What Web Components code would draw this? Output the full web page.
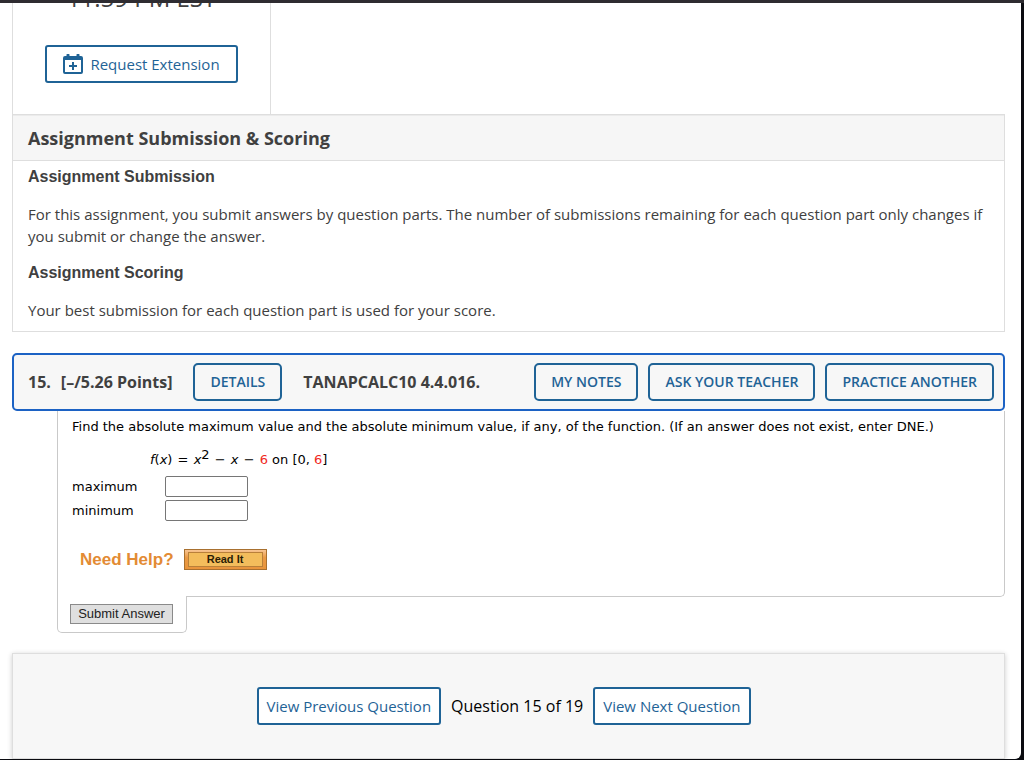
<!DOCTYPE html>
<html lang="en">
<head>
<meta charset="utf-8">
<title>Question 15</title>
<style>
    body{
        margin:0;
        background-color:#0a0b10;
        color:#404040;
        font-family:"Open Sans", "Liberation Sans", sans-serif;
    }
</style>
</head>
<body>
<assignment-page>
    <due-card time="11:59 PM EST"></due-card>
    <scoring-panel>
        <span slot="title">Assignment Submission &amp; Scoring</span>
    </scoring-panel>
    <question-box number="15." points="[–/5.26 Points]" code="TANAPCALC10 4.4.016."></question-box>
    <question-nav>Question 15 of 19</question-nav>
</assignment-page>

<script>
class AssignmentPage extends HTMLElement{
    constructor(){
        super()
        this.attachShadow({mode: "open"})
        this.shadowRoot.innerHTML = `
            <style>
                :host{
                    display:block;
                    box-sizing:border-box;
                    min-height:100vh;
                    padding:0 3px 1px 0;
                    border-top:3px solid #2e2c31;
                }
                main{
                    box-sizing:border-box;
                    min-height:calc(100vh - 4px);
                    padding:0 16px 0 12px;
                    overflow:hidden;
                    background-color:#fff;
                    border-bottom-right-radius:6px;
                }
            </style>
            <main><slot></slot></main>
        `
    }
}
customElements.define('assignment-page', AssignmentPage)

//blue outlined button, type="caps" is the bold one in the question header
class OutlineButton extends HTMLElement{
    constructor(){
        super()
        this.attachShadow({mode: "open"})
        this.shadowRoot.innerHTML = `
            <style>
                :host{
                    display:inline-block;
                }
                button{
                    display:flex;
                    align-items:center;
                    gap:7px;
                    height:38px;
                    padding:0 var(--pad, 8px);
                    border:2px solid #1f6396;
                    border-radius:3px;
                    background-color:#fff;
                    color:#1f6396;
                    font:15px/22px "Open Sans", sans-serif;
                    white-space:nowrap;
                }
                :host([type="caps"]) button{
                    padding:0 15px;
                    border-radius:5px;
                    background-color:#f7f7f7;
                    font-size:14px;
                    font-weight:600;
                }
            </style>
            <button type="button"><slot name="icon"></slot><slot></slot></button>
        `
    }
}
customElements.define('outline-button', OutlineButton)

class DueCard extends HTMLElement{
    constructor(){
        super()
        this.attachShadow({mode: "open"})
        this.shadowRoot.innerHTML = `
            <style>
                :host{
                    display:flex;
                    flex-direction:column;
                    justify-content:flex-end;
                    align-items:center;
                    box-sizing:border-box;
                    width:259px;
                    height:111px;
                    padding-bottom:31px;
                    overflow:hidden;
                    border:1px solid #dedede;
                    border-width:0 1px;
                }
                time{
                    flex:none;
                    margin-bottom:32px;
                    font-size:24px;
                    line-height:30px;
                }
                outline-button{
                    --pad:16px;
                    flex:none;
                }
                svg{
                    display:block;
                }
            </style>
            <time></time>
            <outline-button>
                <svg slot="icon" width="20" height="20" viewBox="0 0 20 20" fill="none" stroke="#1f6396" aria-hidden="true">
                    <rect x="1" y="3" width="18" height="16" rx="1" stroke-width="2"/>
                    <path d="M1 4.5h18" stroke-width="3"/>
                    <path d="M5 1v3M15 1v3" stroke-width="3" stroke-linecap="round"/>
                    <path d="M10 8v8M6 12h8" stroke-width="2"/>
                </svg>
                Request Extension
            </outline-button>
        `
    }
    connectedCallback(){
        this.shadowRoot.querySelector('time').textContent = this.getAttribute('time')
    }
}
customElements.define('due-card', DueCard)

class ScoringPanel extends HTMLElement{
    constructor(){
        super()
        this.attachShadow({mode: "open"})
        this.shadowRoot.innerHTML = `
            <style>
                :host{
                    display:block;
                    margin-bottom:21px;
                    border:1px solid #dedede;
                    font-size:15px;
                    line-height:22px;
                }
                h2{
                    margin:0;
                    padding:10px 15px;
                    border-top:1px solid #ebebeb;
                    border-bottom:1px solid #dedede;
                    background-color:#f6f6f6;
                    font-size:18px;
                    line-height:24px;
                }
                section{
                    padding:5px 15px 10px;
                }
                h3{
                    margin:0 0 15px;
                    font-family:"Liberation Sans", Arial, sans-serif;
                    font-size:16px;
                }
                p{
                    margin:0 0 15px;
                }
                p:last-child{
                    margin:0;
                }
            </style>
            <h2><slot name="title"></slot></h2>
            <section>
                <h3>Assignment Submission</h3>
                <p>For this assignment, you submit answers by question parts. The number of submissions remaining for each question part only changes if you submit or change the answer.</p>
                <h3>Assignment Scoring</h3>
                <p>Your best submission for each question part is used for your score.</p>
            </section>
        `
    }
}
customElements.define('scoring-panel', ScoringPanel)

class QuestionBox extends HTMLElement{
    constructor(){
        super()
        this.attachShadow({mode: "open"})
        this.shadowRoot.innerHTML = `
            <style>
                :host{
                    display:block;
                    margin-bottom:20px;
                }
                header{
                    display:flex;
                    align-items:center;
                    gap:10px;
                    padding:8px 9px 8px 14px;
                    border:2px solid #1c62c4;
                    border-radius:5px;
                    background-color:#f7f7f7;
                    font-size:16px;
                    font-weight:bold;
                    line-height:22px;
                }
                #points{
                    margin-right:11px;
                }
                #code{
                    flex:1;
                    margin-left:11px;
                }
                form{
                    margin-left:45px;
                    color:#000;
                    font:13px/20px "DejaVu Sans", Verdana, sans-serif;
                }
                .content{
                    padding:6px 14px 26px;
                    border:1px solid #c9c9c9;
                    border-top:0;
                    border-radius:0 0 5px 0;
                }
                p{
                    margin:0;
                }
                .formula{
                    margin:13px 0 6px 78px;
                }
                .operator{
                    margin:0 1px;
                }
                sup{
                    font-size:13px;
                    line-height:0;
                }
                .random{
                    color:#f0281e;
                }
                .row{
                    display:flex;
                    align-items:center;
                    margin-bottom:3px;
                }
                .row label{
                    width:93px;
                }
                .row input{
                    box-sizing:border-box;
                    width:83px;
                    height:21px;
                    border:1px solid #767676;
                    border-radius:2px;
                    background-color:#fff;
                }
                .help{
                    display:flex;
                    align-items:center;
                    gap:10px;
                    margin:28px 0 0 8px;
                    color:#e38b34;
                    font:bold 17px/21px "Liberation Sans", Arial, sans-serif;
                }
                .help button{
                    width:83px;
                    height:21px;
                    padding:2px 3px;
                    border:1px solid #a8702f;
                    background:linear-gradient(#f7c492, #ea9a45 40%, #e8943c);
                    color:#2a1c05;
                    font:bold 11px/13px "Liberation Sans", Arial, sans-serif;
                }
                .help button span{
                    display:block;
                    border:1px solid #b9803a;
                    background-color:#f3bd5c;
                }
                .tab{
                    position:relative;
                    box-sizing:border-box;
                    width:130px;
                    margin-top:-1px;
                    padding:8px 12px;
                    border:1px solid #c9c9c9;
                    border-top:0;
                    border-radius:0 0 5px 5px;
                    background-color:#fff;
                }
                .tab button{
                    display:block;
                    width:103px;
                    height:20px;
                    padding:0;
                    border:1px solid #8a8a8a;
                    background-color:#dfdfdf;
                    color:#222;
                    font:13px/16px "Liberation Sans", Arial, sans-serif;
                }
            </style>
            <header>
                <span id="number"></span>
                <span id="points"></span>
                <outline-button type="caps">DETAILS</outline-button>
                <span id="code"></span>
                <outline-button type="caps">MY NOTES</outline-button>
                <outline-button type="caps">ASK YOUR TEACHER</outline-button>
                <outline-button type="caps">PRACTICE ANOTHER</outline-button>
            </header>
            <form>
                <div class="content">
                    <p>Find the absolute maximum value and the absolute minimum value, if any, of the function. (If an answer does not exist, enter DNE.)</p>
                    <p class="formula"><i>f</i>(<i>x</i>) <span class="operator">=</span> <i>x</i><sup>2</sup> <span class="operator">−</span> <i>x</i> <span class="operator">−</span> <span class="random">6</span> on [0, <span class="random">6</span>]</p>
                    <div class="row"><label for="maximum">maximum</label><input id="maximum" type="text"></div>
                    <div class="row"><label for="minimum">minimum</label><input id="minimum" type="text"></div>
                    <div class="help">Need Help? <button type="button"><span>Read It</span></button></div>
                </div>
                <div class="tab"><button type="submit">Submit Answer</button></div>
            </form>
        `
    }
    connectedCallback(){
        for(const id of ['number', 'points', 'code']){
            this.shadowRoot.getElementById(id).textContent = this.getAttribute(id)
        }
        this.shadowRoot.querySelector('form').addEventListener('submit', this._submit.bind(this))
    }
    //stay on the page when the answer is submitted
    _submit(event){
        event.preventDefault()
    }
}
customElements.define('question-box', QuestionBox)

class QuestionNav extends HTMLElement{
    constructor(){
        super()
        this.attachShadow({mode: "open"})
        this.shadowRoot.innerHTML = `
            <style>
                :host{
                    display:block;
                }
                nav{
                    display:flex;
                    align-items:center;
                    justify-content:center;
                    gap:10px;
                    padding:33px 10px 33px 0;
                    border:1px solid #dedede;
                    background-color:#f7f7f7;
                    box-shadow:0 1px 5px rgba(0,0,0,.2);
                    color:#000;
                    font-size:16px;
                    line-height:22px;
                }
            </style>
            <nav>
                <outline-button>View Previous Question</outline-button>
                <slot></slot>
                <outline-button>View Next Question</outline-button>
            </nav>
        `
    }
}
customElements.define('question-nav', QuestionNav)
</script>
</body>
</html>
